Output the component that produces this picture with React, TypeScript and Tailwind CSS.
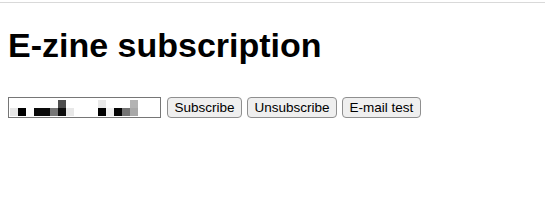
import React from "react";

// pixelated redaction over the typed e-mail address
const mosaic: { x: number; y: number; c: string }[] = [
  { x: 0, y: 1, c: "#e6e6e6" },
  { x: 1, y: 1, c: "#000000" },
  { x: 3, y: 1, c: "#0a0a0a" },
  { x: 4, y: 1, c: "#0a0a0a" },
  { x: 5, y: 1, c: "#767676" },
  { x: 6, y: 0, c: "#4d4d4d" },
  { x: 6, y: 1, c: "#0d0d0d" },
  { x: 7, y: 1, c: "#e8e8e8" },
  { x: 11, y: 0, c: "#e8e8e8" },
  { x: 11, y: 1, c: "#000000" },
  { x: 12, y: 1, c: "#f0f0f0" },
  { x: 13, y: 1, c: "#050505" },
  { x: 14, y: 1, c: "#747474" },
  { x: 15, y: 0, c: "#b3b3b3" },
  { x: 15, y: 1, c: "#a8a8a8" },
];

const Button: React.FC<{ label: string; width: string }> = ({ label, width }) => (
  <button
    type="button"
    className={`${width} h-[21px] rounded-[4px] border border-[#8f8f8f] bg-[#efefef] text-center text-[13.5px] leading-[19px] text-black`}
  >
    {label}
  </button>
);

export default function App() {
  return (
    <div
      className="min-h-[207px] bg-white pt-[2px] text-black"
      style={{ fontFamily: '"Liberation Sans", Arial, sans-serif' }}
    >
      <div className="border-t border-[#d9d9d9] px-[8px]">
        <h1 className="mt-[23px] text-[34px] font-bold leading-[39px]">E-zine subscription</h1>

        <form className="mt-[32px] flex items-center gap-[5px]" onSubmit={(e) => e.preventDefault()}>
          <div className="mr-[1px] flex h-[21px] w-[153px] items-center border border-[#767676] bg-white pl-[1px]">
            <svg width="130" height="16" viewBox="0 0 130 16">
              {mosaic.map((m, i) => (
                <rect key={i} x={m.x * 8} y={m.y * 8} width="8" height="8" fill={m.c} />
              ))}
            </svg>
          </div>
          <Button label="Subscribe" width="w-[75px]" />
          <Button label="Unsubscribe" width="w-[90px]" />
          <Button label="E-mail test" width="w-[79px]" />
        </form>
      </div>
    </div>
  );
}
